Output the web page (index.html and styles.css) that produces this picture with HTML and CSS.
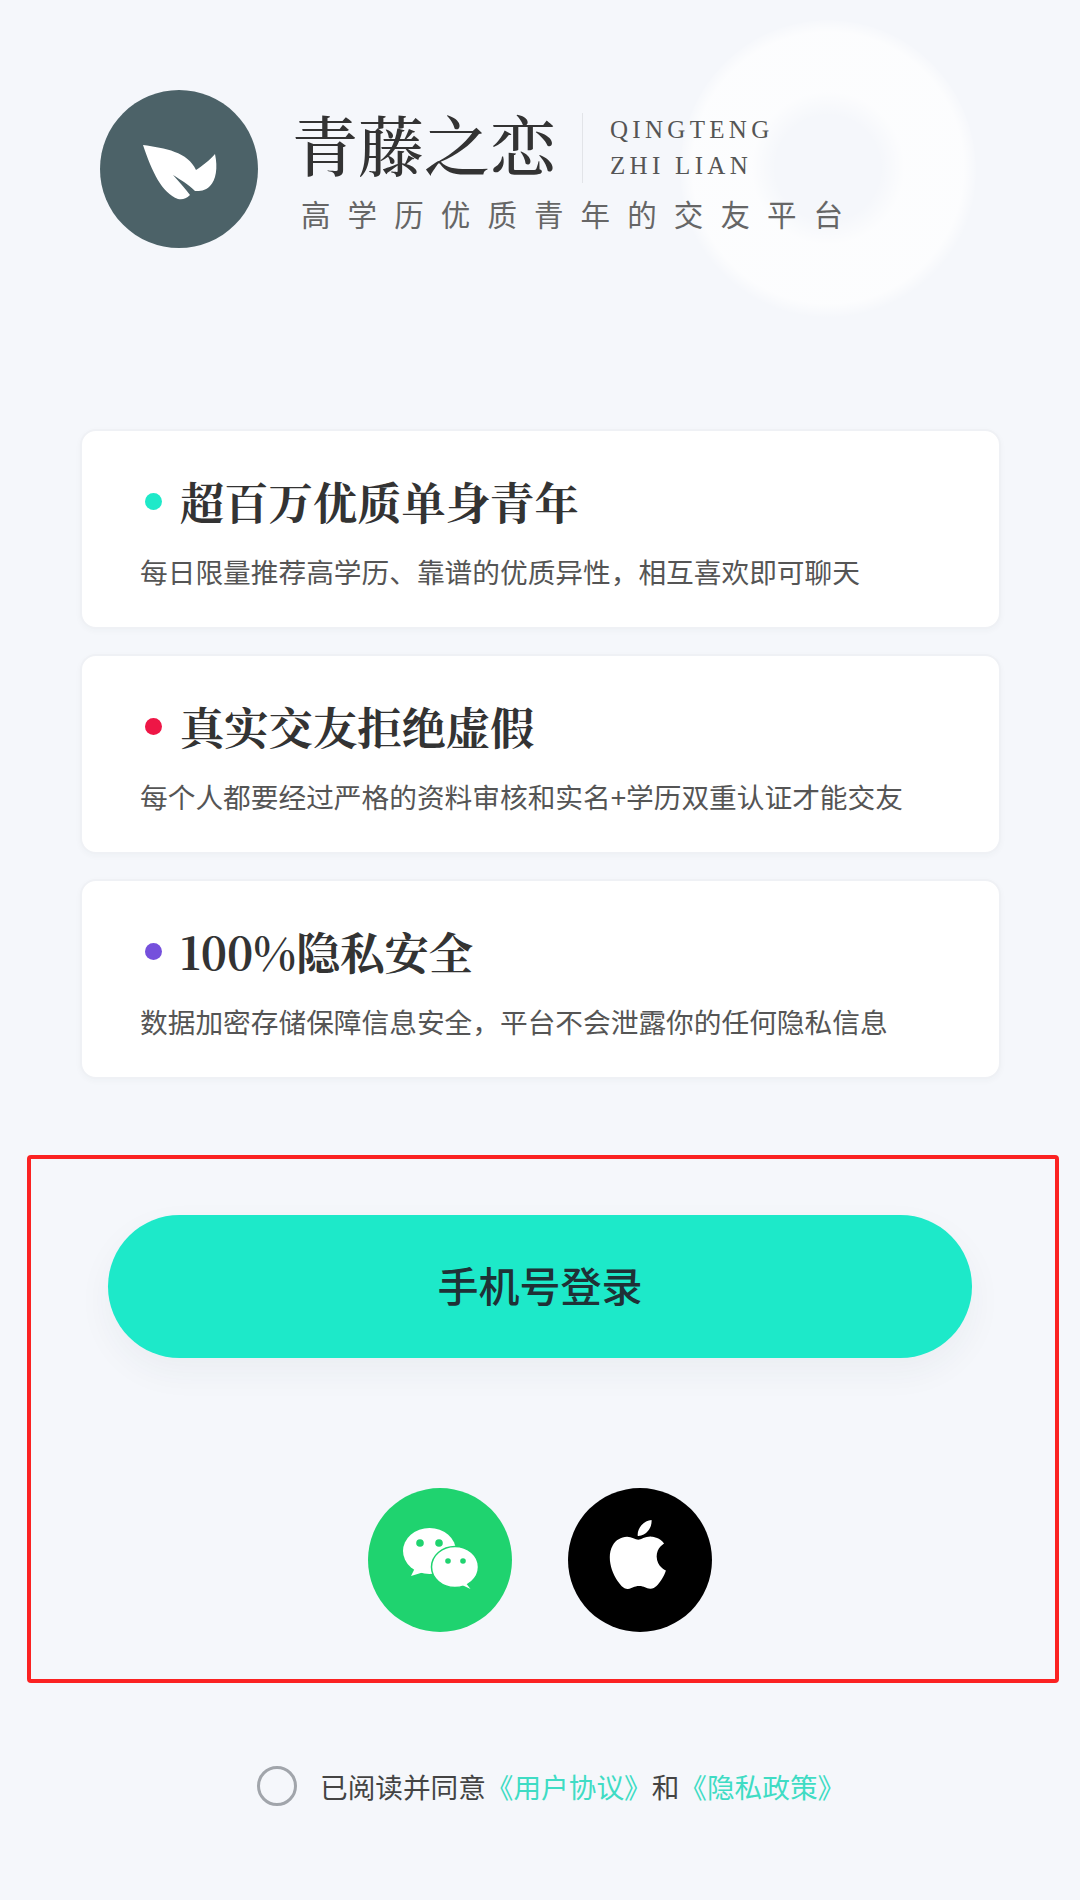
FILE: index.html
```html
<!DOCTYPE html>
<html lang="zh-CN">
<head>
<meta charset="utf-8">
<title>青藤之恋</title>
<link rel="stylesheet" href="styles.css">
</head>
<body>
<div class="page">
  <div class="ring"></div>
  <header class="brand">
    <div class="logo">
      <svg viewBox="0 0 158 158" class="fill"><path fill="#fff" d="M43 55C65 58 88 62 96 80C102 76 110 70 115 64C118 78 116 90 110 96C105 101 100 101 95 101C88 94 81 90 73 85C79 92 85 98 90 105C86 109 82 110 78 109C62 103 52 82 43 55Z"/></svg>
    </div>
    <div class="brand-text">
      <div class="brand-top">
        <h1 class="brand-name">青藤之恋</h1>
        <div class="brand-en"><span>QINGTENG</span><span>ZHI LIAN</span></div>
      </div>
      <p class="tagline">高学历优质青年的交友平台</p>
    </div>
  </header>

  <section class="cards">
    <article class="card">
      <h2 class="card-title"><i class="dot dot-teal"></i>超百万优质单身青年</h2>
      <p class="card-desc">每日限量推荐高学历、靠谱的优质异性，相互喜欢即可聊天</p>
    </article>
    <article class="card">
      <h2 class="card-title"><i class="dot dot-red"></i>真实交友拒绝虚假</h2>
      <p class="card-desc">每个人都要经过严格的资料审核和实名+学历双重认证才能交友</p>
    </article>
    <article class="card">
      <h2 class="card-title"><i class="dot dot-purple"></i>100%隐私安全</h2>
      <p class="card-desc">数据加密存储保障信息安全，平台不会泄露你的任何隐私信息</p>
    </article>
  </section>

  <section class="login">
    <button class="phone-btn">手机号登录</button>
    <div class="socials">
      <div class="social social-wechat">
        <svg viewBox="0 0 144 144" class="fill">
          <ellipse cx="61.500" cy="63" rx="26.500" ry="23" fill="#fff"/>
          <path d="M47 80L43 88L56 84Z" fill="#fff"/>
          <circle cx="52" cy="55" r="3.800" fill="#1fd36f"/>
          <circle cx="71" cy="55" r="3.800" fill="#1fd36f"/>
          <ellipse cx="87" cy="79" rx="23.500" ry="20.500" fill="#fff" stroke="#1fd36f" stroke-width="1.500"/>
          <path d="M97 94L102.500 101L94 97Z" fill="#fff"/>
          <circle cx="80" cy="73" r="2.800" fill="#1fd36f"/>
          <circle cx="95" cy="73" r="2.800" fill="#1fd36f"/>
        </svg>
      </div>
      <div class="social social-apple">
        <svg viewBox="0 0 144 144" class="fill">
          <path transform="translate(35.400 32) scale(2.870)" fill="#fff" d="M12.152 6.896c-.948 0-2.415-1.078-3.96-1.04-2.04.027-3.91 1.183-4.961 3.014-2.117 3.675-.546 9.103 1.519 12.090 1.013 1.454 2.208 3.090 3.792 3.039 1.520-.065 2.090-.987 3.935-.987 1.831 0 2.350.987 3.960.948 1.637-.026 2.676-1.480 3.676-2.948 1.156-1.688 1.636-3.325 1.662-3.415-.039-.013-3.182-1.221-3.220-4.857-.026-3.040 2.480-4.494 2.597-4.559-1.429-2.090-3.623-2.324-4.390-2.376-2-.156-3.675 1.090-4.610 1.090zM15.530 3.830c.843-1.012 1.400-2.427 1.245-3.830-1.207.052-2.662.805-3.532 1.818-.780.896-1.454 2.338-1.273 3.714 1.338.104 2.715-.688 3.559-1.701"/>
        </svg>
      </div>
    </div>
  </section>

  <footer class="agree">
    <span class="radio"></span>
    <p class="agree-text">已阅读并同意<a class="link">《用户协议》</a>和<a class="link">《隐私政策》</a></p>
  </footer>
</div>
</body>
</html>
```
FILE: styles.css
```css
* { box-sizing: border-box; }
html, body { margin: 0; padding: 0; }
body {
  background: #f5f7fb;
  font-family: "Noto Sans CJK SC", "Noto Sans", sans-serif;
  color: #333;
}
.page {
  position: relative;
  width: 1080px;
  height: 1900px;
  overflow: hidden;
  padding-top: 90px;
}
.fill { display: block; width: 100%; height: 100%; }

.ring {
  position: absolute;
  left: 680px;
  top: 20px;
  width: 296px;
  height: 302px;
  border-radius: 50%;
  background: radial-gradient(circle at 50% 49%, rgba(245,247,251,0) 0, rgba(245,247,251,0) 52px, rgba(255,255,255,.7) 76px, rgba(255,255,255,.7) 136px, rgba(255,255,255,0) 150px);
}

.brand {
  position: relative;
  display: flex;
  align-items: flex-start;
  gap: 34px;
  margin-left: 100px;
  height: 158px;
}
.logo {
  width: 158px;
  height: 158px;
  border-radius: 50%;
  background: #4c6268;
  flex: none;
}
.brand-text { padding-top: 5px; }
.brand-top { display: flex; align-items: center; height: 95px; }
.brand-name {
  margin: 0;
  font-family: "Noto Serif CJK SC", "Noto Sans CJK SC", serif;
  font-size: 66px;
  line-height: 90px;
  font-weight: 500;
  color: #333;
}
.brand-en {
  display: flex;
  flex-direction: column;
  gap: 6px;
  margin: 10px 0 0 26px;
  padding: 2px 0 2px 27px;
  border-left: 1px solid #e2e4e8;
  font-family: "Liberation Serif", serif;
  font-size: 25px;
  line-height: 30px;
  letter-spacing: 4.300px;
  color: #555;
}
.tagline {
  margin: 3px 0 0;
  padding-left: 9px;
  font-size: 29.500px;
  line-height: 40px;
  letter-spacing: 17.100px;
  color: #666;
  white-space: nowrap;
}

.cards {
  position: relative;
  display: flex;
  flex-direction: column;
  gap: 25px;
  width: 921px;
  margin: 181px 0 0 80px;
}
.card {
  height: 200px;
  padding: 40px 0 0 59px;
  background: #fff;
  border: 2px solid #eff1f5;
  border-radius: 16px;
  box-shadow: 0 2px 6px rgba(40,50,70,.03);
}
.card-title {
  display: flex;
  align-items: center;
  margin: 0;
  font-family: "Noto Serif CJK SC", "Noto Sans CJK SC", "Liberation Serif", serif;
  font-size: 44.300px;
  line-height: 60px;
  font-weight: 700;
  color: #333;
}
.dot {
  width: 17px;
  height: 17px;
  border-radius: 50%;
  margin: 0 18px 0 4px;
  flex: none;
}
.dot-teal { background: #1ee9c9; }
.dot-red { background: #ee1646; }
.dot-purple { background: #7550dc; }
.card-desc {
  margin: 20px 0 0 -1px;
  font-size: 27.700px;
  line-height: 40px;
  color: #555;
  white-space: nowrap;
}

.login {
  width: 1032px;
  height: 528px;
  margin: 76px 0 0 27px;
  padding: 56px 0 0 77px;
  border: 4px solid #fb2222;
  border-radius: 4px;
}
.phone-btn {
  display: block;
  width: 864px;
  height: 143px;
  padding: 0 0 5px;
  border: 0;
  border-radius: 72px;
  background: #1de9c9;
  color: #1f3136;
  font-family: inherit;
  font-size: 41px;
  font-weight: 500;
  box-shadow: 0 14px 34px rgba(40,50,80,.05);
}
.socials {
  display: flex;
  gap: 56px;
  margin: 130px 0 0 260px;
}
.social {
  width: 144px;
  height: 144px;
  border-radius: 50%;
}
.social-wechat { background: #1fd36f; }
.social-apple { background: #000; }

.agree {
  display: flex;
  align-items: center;
  gap: 23px;
  margin: 83px 0 0 257px;
}
.radio {
  width: 40px;
  height: 40px;
  border: 3px solid #a1a5ab;
  border-radius: 50%;
  flex: none;
}
.agree-text {
  margin: 0;
  font-size: 27.650px;
  line-height: 40px;
  color: #444;
  white-space: nowrap;
}
.link { color: #3fdcc4; }
```
